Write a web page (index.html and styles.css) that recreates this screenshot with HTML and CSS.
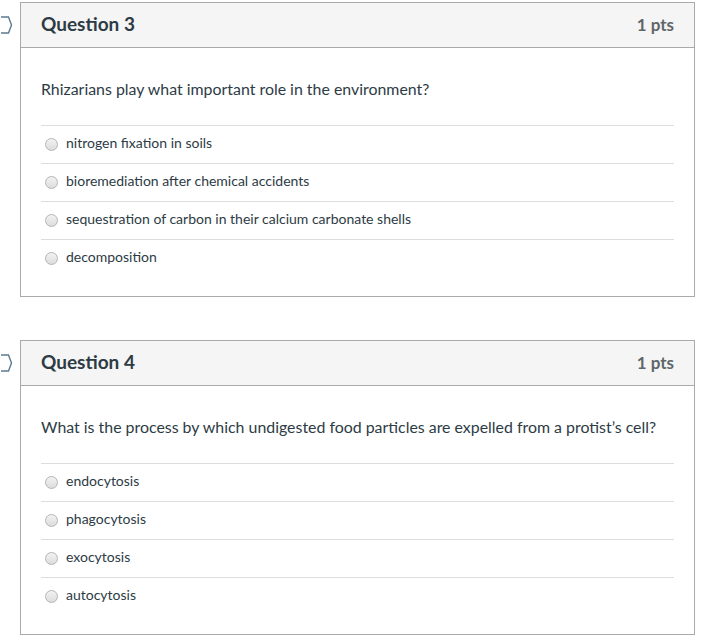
FILE: index.html
```html
<!DOCTYPE html>
<html>
<head>
<meta charset="utf-8">
<link rel="stylesheet" href="styles.css">
</head>
<body>
<div class="quiz">
  <div class="question">
    <svg class="flag" width="12" height="18" viewBox="0 0 12 18"><path d="M-4 1 H7.5 L10.5 9 L7.5 17 H-4" fill="none" stroke="#5b7b92" stroke-width="1.4"/></svg>
    <div class="q-header">
      <span class="q-title">Question 3</span>
      <span class="q-pts">1 pts</span>
    </div>
    <div class="q-body">
      <div class="q-text">Rhizarians play what important role in the environment?</div>
      <div class="answers">
        <div class="answer"><span class="radio"></span><span class="a-text">nitrogen fixation in soils</span></div>
        <div class="answer"><span class="radio"></span><span class="a-text">bioremediation after chemical accidents</span></div>
        <div class="answer"><span class="radio"></span><span class="a-text">sequestration of carbon in their calcium carbonate shells</span></div>
        <div class="answer"><span class="radio"></span><span class="a-text">decomposition</span></div>
      </div>
    </div>
  </div>
  <div class="question">
    <svg class="flag" width="12" height="18" viewBox="0 0 12 18"><path d="M-4 1 H7.5 L10.5 9 L7.5 17 H-4" fill="none" stroke="#5b7b92" stroke-width="1.4"/></svg>
    <div class="q-header">
      <span class="q-title">Question 4</span>
      <span class="q-pts">1 pts</span>
    </div>
    <div class="q-body">
      <div class="q-text">What is the process by which undigested food particles are expelled from a protist’s cell?</div>
      <div class="answers">
        <div class="answer"><span class="radio"></span><span class="a-text">endocytosis</span></div>
        <div class="answer"><span class="radio"></span><span class="a-text">phagocytosis</span></div>
        <div class="answer"><span class="radio"></span><span class="a-text">exocytosis</span></div>
        <div class="answer"><span class="radio"></span><span class="a-text">autocytosis</span></div>
      </div>
    </div>
  </div>
</div>
</body>
</html>
```
FILE: styles.css
```css
html, body {
  margin: 0;
  padding: 0;
  background: #fff;
}
body {
  font-family: Lato, "Open Sans", sans-serif;
  color: #2d3b45;
}
.quiz {
  padding: 2px 0 0 20px;
  width: 675px;
  display: flex;
  flex-direction: column;
  gap: 43px;
}
.question {
  position: relative;
  border: 1px solid #aaaaaa;
  background: #fff;
}
.flag {
  position: absolute;
  left: -20px;
  top: 13px;
}
.q-header {
  height: 44px;
  background: #f5f5f5;
  border-bottom: 1px solid #aaaaaa;
  display: flex;
  align-items: center;
  justify-content: space-between;
  padding: 0 20px;
}
.q-title {
  font-size: 19px;
  line-height: 24px;
  margin-top: -2px;
  font-weight: 700;
  color: #2d3b45;
}
.q-pts {
  font-size: 17px;
  line-height: 22px;
  margin-top: -1px;
  font-weight: 700;
  color: #5f6669;
}
.q-body {
  padding: 30px 20px 19px;
}
.q-text {
  font-size: 15.9px;
  line-height: 22px;
  margin-bottom: 25px;
}
.answer {
  border-top: 1px solid #dddddd;
  height: 37px;
  display: flex;
  align-items: center;
  padding-left: 4px;
}
.radio {
  width: 11px;
  height: 11px;
  border-radius: 50%;
  border: 1px solid #b5b5b5;
  background: linear-gradient(#f2f2f2, #dcdcdc);
  margin-right: 8px;
  flex: none;
}
.a-text {
  font-size: 14px;
  line-height: 18px;
  margin-top: -3px;
  color: #2d3b45;
}
```
